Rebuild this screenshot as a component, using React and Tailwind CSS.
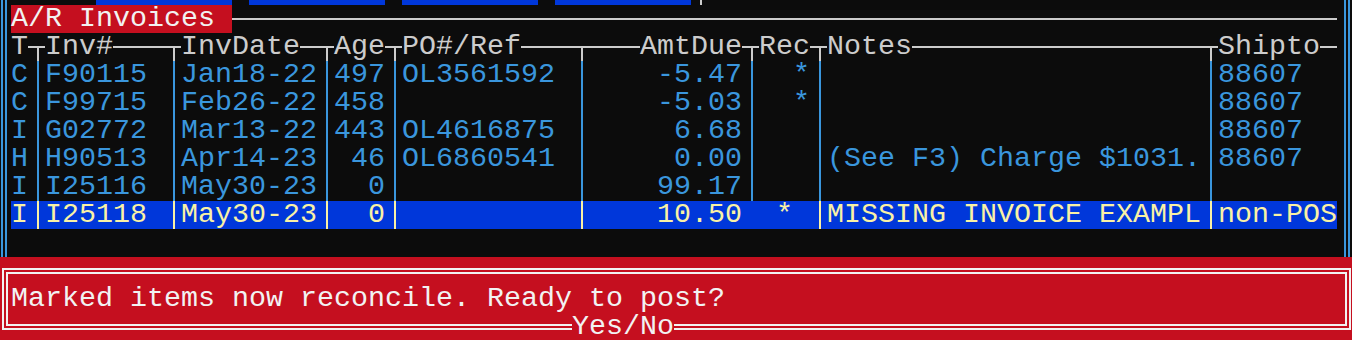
import React from 'react';

const CW = 17;
const CYAN = '#3a96dd';
const GRAY = '#cccccc';
const WHITE = '#f2f2f2';
const YEL = '#f9f1a5';

function Glyph({ k, n = 1, fill }) {
  const w = n * CW;
  const R = {
    h: [[0, 13, w, 2]],
    v: [[9, 0, 2, 28]],
    tee: [[0, 13, w, 2], [9, 13, 2, 15]],
    dv: [[7, 0, 2, 28], [11, 0, 2, 28]],
    DV: [[8, 0, 2, 28], [12, 0, 2, 28]],
    DH: [[0, 11, w, 2], [0, 15, w, 2]],
    TL: [[8, 11, 9, 2], [8, 11, 2, 17], [12, 15, 5, 2], [12, 15, 2, 13]],
    TR: [[0, 11, 14, 2], [12, 11, 2, 17], [0, 15, 10, 2], [8, 15, 2, 13]],
    BL: [[8, 0, 2, 17], [8, 15, 9, 2], [12, 0, 2, 13], [12, 11, 5, 2]],
    BR: [[12, 0, 2, 17], [0, 15, 14, 2], [8, 0, 2, 13], [0, 11, 10, 2]],
  }[k];
  return (
    <svg width={w} height={28} className="block shrink-0">
      {R.map(([x, y, rw, rh], i) => (
        <rect key={i} x={x} y={y} width={rw} height={rh} fill={fill} />
      ))}
    </svg>
  );
}

function T({ s, c = '' }) {
  return <span className={'block shrink-0 whitespace-pre ' + c}>{s}</span>;
}

const padR = (s, n) => (s || '').padEnd(n, ' ');
const padL = (s, n) => (s || '').padStart(n, ' ');

const rows = [
  { t: 'C', inv: 'F90115', date: 'Jan18-22', age: '497', po: 'OL3561592', amt: '-5.47', rec: '  *', notes: '', ship: '88607' },
  { t: 'C', inv: 'F99715', date: 'Feb26-22', age: '458', po: '', amt: '-5.03', rec: '  *', notes: '', ship: '88607' },
  { t: 'I', inv: 'G02772', date: 'Mar13-22', age: '443', po: 'OL4616875', amt: '6.68', rec: '', notes: '', ship: '88607' },
  { t: 'H', inv: 'H90513', date: 'Apr14-23', age: '46', po: 'OL6860541', amt: '0.00', rec: '', notes: '(See F3) Charge $1031.', ship: '88607' },
  { t: 'I', inv: 'I25116', date: 'May30-23', age: '0', po: '', amt: '99.17', rec: '', notes: '', ship: '' },
  { t: 'I', inv: 'I25118', date: 'May30-23', age: '0', po: '', amt: '10.50', rec: ' * ', notes: 'MISSING INVOICE EXAMPL', ship: 'non-POS', sel: true },
];

function DataRow({ r }) {
  const sel = r.sel;
  const tc = sel ? 'text-[#f9f1a5]' : 'text-[#3a96dd]';
  const lc = sel ? YEL : CYAN;
  return (
    <div className="flex h-[28px]">
      <Glyph k="dv" fill={CYAN} />
      <div className={'flex ' + (sel ? 'bg-[#0037da]' : '')}>
        <T s={r.t} c={tc} />
        <Glyph k="v" fill={lc} />
        <T s={padR(r.inv, 7)} c={tc} />
        <Glyph k="v" fill={lc} />
        <T s={padR(r.date, 8)} c={tc} />
        <Glyph k="v" fill={lc} />
        <T s={padL(r.age, 3)} c={tc} />
        <Glyph k="v" fill={lc} />
        <T s={padR(r.po, 10)} c={tc} />
        <Glyph k="v" fill={lc} />
        <T s={padL(r.amt, 9)} c={tc} />
        {sel ? <T s=" " c={tc} /> : <Glyph k="v" fill={lc} />}
        <T s={padR(r.rec, 3)} c={tc} />
        <Glyph k="v" fill={lc} />
        <T s={padR(r.notes, 22)} c={tc} />
        <Glyph k="v" fill={lc} />
        <T s={padR(r.ship, 7)} c={tc} />
      </div>
      <Glyph k="dv" fill={CYAN} />
    </div>
  );
}

export default function App() {
  const hc = 'text-[#cccccc]';
  return (
    <div className="w-[1352px] h-[340px] overflow-hidden bg-[#0c0c0c] font-['Liberation_Mono',monospace] text-[28.33px] leading-[28px]">
      <div className="-mt-[23px] -ml-[6px] w-[1360px] flex flex-col">
        {/* row 0: menu bar remnants */}
        <div className="flex h-[28px]">
          <Glyph k="dv" fill={CYAN} />
          <T s={'     '} />
          <T s={'        '} c="bg-[#0037da]" />
          <T s=" " />
          <T s={'        '} c="bg-[#0037da]" />
          <T s=" " />
          <T s={'        '} c="bg-[#0037da]" />
          <T s=" " />
          <T s={'        '} c="bg-[#0037da]" />
          <Glyph k="v" fill={GRAY} />
          <T s={' '.repeat(37)} />
          <Glyph k="dv" fill={CYAN} />
        </div>

        {/* row 1: title */}
        <div className="flex h-[28px]">
          <Glyph k="dv" fill={CYAN} />
          <T s="A/R Invoices " c="bg-[#c50f1f] text-[#f2f2f2]" />
          <Glyph k="h" n={65} fill={GRAY} />
          <Glyph k="dv" fill={CYAN} />
        </div>

        {/* row 2: header */}
        <div className="flex h-[28px]">
          <Glyph k="dv" fill={CYAN} />
          <T s="T" c={hc} />
          <Glyph k="tee" fill={GRAY} />
          <T s="Inv#" c={hc} />
          <Glyph k="h" n={3} fill={GRAY} />
          <Glyph k="tee" fill={GRAY} />
          <T s="InvDate" c={hc} />
          <Glyph k="h" n={1} fill={GRAY} />
          <Glyph k="tee" fill={GRAY} />
          <T s="Age" c={hc} />
          <Glyph k="tee" fill={GRAY} />
          <T s="PO#/Ref" c={hc} />
          <Glyph k="h" n={3} fill={GRAY} />
          <Glyph k="tee" fill={GRAY} />
          <Glyph k="h" n={3} fill={GRAY} />
          <T s="AmtDue" c={hc} />
          <Glyph k="tee" fill={GRAY} />
          <T s="Rec" c={hc} />
          <Glyph k="tee" fill={GRAY} />
          <T s="Notes" c={hc} />
          <Glyph k="h" n={17} fill={GRAY} />
          <Glyph k="tee" fill={GRAY} />
          <T s="Shipto" c={hc} />
          <Glyph k="h" n={1} fill={GRAY} />
          <Glyph k="dv" fill={CYAN} />
        </div>

        {rows.map((r, i) => (
          <DataRow key={i} r={r} />
        ))}

        {/* empty row */}
        <div className="flex h-[28px]">
          <Glyph k="dv" fill={CYAN} />
          <T s={' '.repeat(78)} />
          <Glyph k="dv" fill={CYAN} />
        </div>

        {/* dialog */}
        <div className="flex flex-col bg-[#c50f1f]">
          <div className="flex h-[28px]">
            <Glyph k="TL" fill={WHITE} />
            <Glyph k="DH" n={78} fill={WHITE} />
            <Glyph k="TR" fill={WHITE} />
          </div>
          <div className="flex h-[28px]">
            <Glyph k="DV" fill={WHITE} />
            <T s={padR('Marked items now reconcile. Ready to post?', 78)} c="text-[#f2f2f2]" />
            <Glyph k="DV" fill={WHITE} />
          </div>
          <div className="flex h-[28px]">
            <Glyph k="BL" fill={WHITE} />
            <Glyph k="DH" n={33} fill={WHITE} />
            <T s="Yes/No" c="text-[#f2f2f2]" />
            <Glyph k="DH" n={39} fill={WHITE} />
            <Glyph k="BR" fill={WHITE} />
          </div>
        </div>
      </div>
    </div>
  );
}
